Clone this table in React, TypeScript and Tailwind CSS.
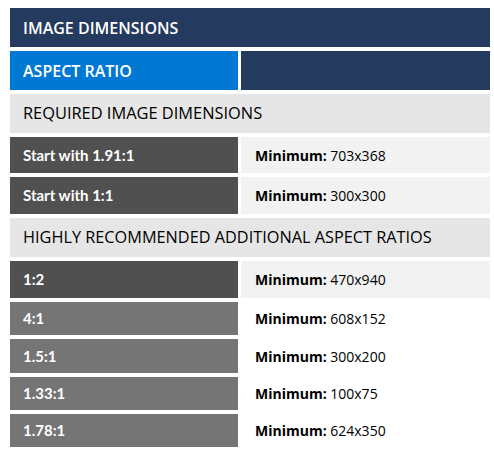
import React from "react";

const font = { fontFamily: '"Open Sans", "Noto Sans", sans-serif' };

function Pair({ label, value, h, dark, lightRight }: { label: string; value: string; h: string; dark: boolean; lightRight: boolean }) {
  return (
    <div className={`flex gap-[3px] ${h}`}>
      <div className={`w-[228px] flex items-center pl-[13px] text-white font-bold text-[15px] font-['Lato',sans-serif] ${dark ? "bg-[#505050]" : "bg-[#757575]"}`}>
        {label}
      </div>
      <div className={`flex-1 flex items-center pl-[14px] text-[14px] text-black ${lightRight ? "bg-[#f2f2f2]" : "bg-white"}`}>
        <span className="font-bold">Minimum:</span>&nbsp;{value}
      </div>
    </div>
  );
}

export default function App() {
  return (
    <div className="w-[494px] h-[462px] bg-white pt-[8px] pl-[10px]" style={font}>
      <div className="w-[480px] flex flex-col gap-[4px]">
        <div className="h-[39px] bg-[#243a5e] flex items-center pl-[13px] text-white font-semibold text-[16px]">
          IMAGE DIMENSIONS
        </div>
        <div className="h-[39px] flex gap-[3px]">
          <div className="w-[228px] bg-[#0078d4] flex items-center pl-[13px] text-white font-semibold text-[16px]">
            ASPECT RATIO
          </div>
          <div className="flex-1 bg-[#243a5e]" />
        </div>
        <div className="h-[39px] bg-[#e6e6e6] flex items-center pl-[13px] text-black text-[16.4px]">
          REQUIRED IMAGE DIMENSIONS
        </div>
        <Pair label="Start with 1.91:1" value="703x368" h="h-[36px]" dark lightRight />
        <Pair label="Start with 1:1" value="300x300" h="h-[37px]" dark lightRight />
        <div className="h-[39px] bg-[#e6e6e6] flex items-center pl-[13px] text-black text-[16.3px]">
          HIGHLY RECOMMENDED ADDITIONAL ASPECT RATIOS
        </div>
        <Pair label="1:2" value="470x940" h="h-[37px]" dark lightRight />
        <Pair label="4:1" value="608x152" h="h-[33px]" dark={false} lightRight={false} />
        <Pair label="1.5:1" value="300x200" h="h-[34px]" dark={false} lightRight={false} />
        <Pair label="1.33:1" value="100x75" h="h-[33px]" dark={false} lightRight={false} />
        <Pair label="1.78:1" value="624x350" h="h-[33px]" dark={false} lightRight={false} />
      </div>
    </div>
  );
}
